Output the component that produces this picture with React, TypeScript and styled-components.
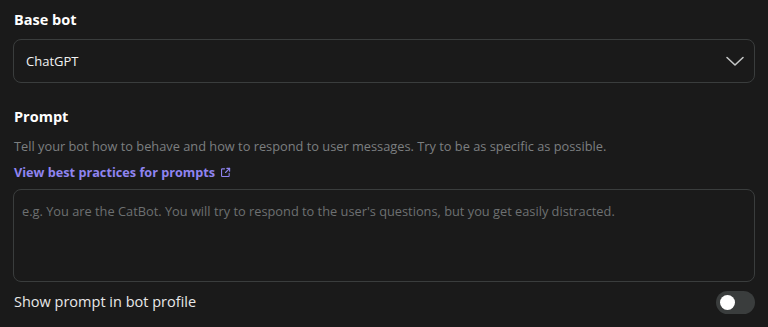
import React, { useState } from "react";
import styled, { createGlobalStyle } from "styled-components";

const GlobalStyle = createGlobalStyle`
  html, body {
    margin: 0;
    padding: 0;
    background: #1a1a1a;
  }
  body {
    font-family: "Open Sans", "Noto Sans", sans-serif;
    color: #e6e6e6;
  }
`;

const Page = styled.div`
  width: 768px;
  height: 327px;
  box-sizing: border-box;
  padding: 8px 13px 0 13px;
  display: flex;
  flex-direction: column;
  overflow: hidden;
`;

const Section = styled.section<{ gap?: number }>`
  display: flex;
  flex-direction: column;
  margin-top: ${(p) => p.gap ?? 0}px;
`;

const Title = styled.h2`
  margin: 0 0 0 1px;
  font-size: 14.5px;
  font-weight: 700;
  line-height: 24px;
  color: #ffffff;
`;

const Select = styled.div`
  margin-top: 7px;
  height: 44px;
  box-sizing: border-box;
  border: 1px solid #3a3d3d;
  border-radius: 8px;
  display: flex;
  align-items: center;
  justify-content: space-between;
  padding: 0 7px 0 12px;
  font-size: 13px;
  color: #f2f2f2;
`;

const Hint = styled.p`
  margin: 8px 0 0 1px;
  font-size: 12.8px;
  line-height: 18px;
  color: #7c7f80;
`;

const Link = styled.a`
  margin: 8px 0 0 1px;
  display: inline-flex;
  align-items: center;
  gap: 5px;
  font-size: 12.7px;
  font-weight: 700;
  line-height: 18px;
  color: #8f84f0;
  text-decoration: none;
  cursor: pointer;
`;

const TextArea = styled.textarea`
  margin-top: 8px;
  height: 93px;
  box-sizing: border-box;
  resize: none;
  background: transparent;
  border: 1px solid #3a3d3d;
  border-radius: 8px;
  padding: 12px 8px;
  font-family: inherit;
  font-size: 12.8px;
  line-height: 18px;
  color: #e6e6e6;
  outline: none;
  &::placeholder {
    color: #6d7071;
  }
`;

const Row = styled.div`
  margin-top: 8px;
  display: flex;
  align-items: center;
  justify-content: space-between;
`;

const RowLabel = styled.span`
  margin-left: 1px;
  font-size: 14.5px;
  line-height: 24px;
  color: #e8e8e8;
`;

const Switch = styled.button<{ on: boolean }>`
  width: 39px;
  height: 23px;
  border: none;
  border-radius: 12px;
  padding: 0 4px;
  background: ${(p) => (p.on ? "#7a6df0" : "#3a3d3d")};
  display: flex;
  align-items: center;
  justify-content: ${(p) => (p.on ? "flex-end" : "flex-start")};
  cursor: pointer;
`;

const Knob = styled.span`
  width: 15px;
  height: 15px;
  border-radius: 50%;
  background: #ffffff;
`;

const Chevron = () => (
  <svg width="24" height="24" viewBox="0 0 24 24" fill="none" stroke="#c4c6c6" strokeWidth="1.6" strokeLinecap="round" strokeLinejoin="round">
    <path d="M4 8.5l8 7.5 8-7.5" />
  </svg>
);

const ExternalIcon = () => (
  <svg width="11" height="11" viewBox="0 0 12 12" fill="none" stroke="#8f84f0" strokeWidth="1.2" strokeLinecap="round" strokeLinejoin="round">
    <path d="M5 2H2.5a.8.8 0 0 0-.8.8v6.7a.8.8 0 0 0 .8.8h6.7a.8.8 0 0 0 .8-.8V7" />
    <path d="M7.5 1.5h3v3" />
    <path d="M10.5 1.5L6 6" />
  </svg>
);

export default function App() {
  const [showPrompt, setShowPrompt] = useState(false);
  return (
    <>
      <GlobalStyle />
      <Page>
        <Section>
          <Title>Base bot</Title>
          <Select>
            <span>ChatGPT</span>
            <Chevron />
          </Select>
        </Section>
        <Section gap={22}>
          <Title>Prompt</Title>
          <Hint>Tell your bot how to behave and how to respond to user messages. Try to be as specific as possible.</Hint>
          <Link>
            View best practices for prompts
            <ExternalIcon />
          </Link>
          <TextArea placeholder="e.g. You are the CatBot. You will try to respond to the user's questions, but you get easily distracted." />
        </Section>
        <Row>
          <RowLabel>Show prompt in bot profile</RowLabel>
          <Switch on={showPrompt} onClick={() => setShowPrompt(!showPrompt)}>
            <Knob />
          </Switch>
        </Row>
      </Page>
    </>
  );
}
